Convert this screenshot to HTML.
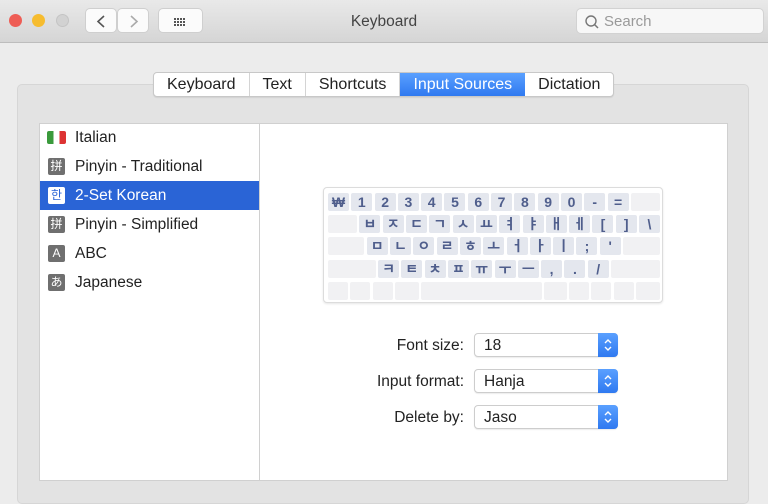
<!DOCTYPE html>
<html><head><meta charset="utf-8"><style>
*{box-sizing:border-box;margin:0;padding:0}
body{width:768px;height:491px;overflow:hidden;background:#ececec;font-family:"Liberation Sans","Noto Sans CJK KR",sans-serif;position:relative;color:#222}
.abs{position:absolute}
.title{left:0;top:0;width:768px;height:43px;background:linear-gradient(#e9e9e9,#d5d5d5);border-bottom:1px solid #bdbdbd}
.dot{width:13px;height:13px;border-radius:50%;top:14px}
.btn{background:#fbfbfb;border:1px solid #cfcfcf;border-radius:5px;height:25px;top:8px}
.group{left:17px;top:84px;width:732px;height:420px;background:#e3e3e3;border:1px solid #d6d6d6;border-radius:5px}
.tabs{left:153px;top:72px;height:25px;display:flex;border:1px solid #c8c8c8;border-radius:4px;background:#fff;overflow:hidden;box-shadow:0 1px 1px rgba(0,0,0,.08)}
.tabs div{font-size:16px;line-height:23px;padding:0 13px;border-right:1px solid #d4d4d4;color:#222}
.tabs .sel{background:linear-gradient(#5aa0ff,#2f79f0);color:#fff;border-right:none}
.panel{left:39px;top:123px;width:689px;height:358px;background:#fff;border:1px solid #d0d0d0}
.div{left:259px;top:123px;width:1px;height:358px;background:#d0d0d0}
.row{left:40px;width:219px;height:29px;font-size:15.5px;line-height:30px;padding-left:35px}
.ic{position:absolute;left:8px;top:6px;width:17px;height:17px;background:#6f6f6f;color:#fff;border-radius:2px;font-size:12px;line-height:17px;text-align:center}
.kb{left:323px;top:187px;width:340px;height:116px;background:#fff;border:1px solid #dcdcdc;border-radius:4px;box-shadow:0 1px 2px rgba(0,0,0,.1)}
.kr{position:absolute;left:4px;width:332px;height:18px;display:flex;gap:2.3px}
.k{width:21px;height:18px;background:#e4e7ee;border-radius:2px;color:#4f5e8c;font-weight:bold;font-size:14px;line-height:18px;text-align:center;flex:none}
.b{background:#f1f1f3;flex:1 1 auto;width:auto}
.lbl{font-size:15.5px;text-align:right;width:200px;left:264px}
.sel2{left:474px;width:144px;height:24px;background:#fff;border:1px solid #cdcdcd;border-radius:4px;font-size:15.5px;line-height:23px;padding-left:9px;box-shadow:0 1px 1px rgba(0,0,0,.08)}
.st{position:absolute;right:-1px;top:-1px;width:20px;height:24px;background:linear-gradient(#5aa0ff,#2f79f0);border-radius:0 4px 4px 0}
</style></head><body>
<div class="abs title"></div>
<div class="abs dot" style="left:9px;background:#ee5d55"></div>
<div class="abs dot" style="left:32px;background:#f6bc2f"></div>
<div class="abs dot" style="left:56px;background:#d2d2d2;border:1px solid #c4c4c4"></div>
<div class="abs btn" style="left:85px;width:32px"><svg width="32" height="25"><path d="M18 7 L12 12.5 L18 18" stroke="#555" stroke-width="1.6" fill="none"/></svg></div>
<div class="abs btn" style="left:117px;width:32px"><svg width="32" height="25"><path d="M13 7 L19 12.5 L13 18" stroke="#aaa" stroke-width="1.6" fill="none"/></svg></div>
<div class="abs btn" style="left:158px;width:45px"><svg width="45" height="25"><g fill="#555"><rect x="15" y="9" width="2" height="2"/><rect x="18" y="9" width="2" height="2"/><rect x="21" y="9" width="2" height="2"/><rect x="24" y="9" width="2" height="2"/><rect x="15" y="12" width="2" height="2"/><rect x="18" y="12" width="2" height="2"/><rect x="21" y="12" width="2" height="2"/><rect x="24" y="12" width="2" height="2"/><rect x="15" y="15" width="2" height="2"/><rect x="18" y="15" width="2" height="2"/><rect x="21" y="15" width="2" height="2"/><rect x="24" y="15" width="2" height="2"/></g></svg></div>
<div class="abs" style="left:0;width:768px;top:13px;text-align:center;font-size:15.5px;color:#444">Keyboard</div>
<div class="abs" style="left:576px;top:8px;width:188px;height:26px;background:#f7f7f7;border:1px solid #d2d2d2;border-radius:5px;font-size:15px;color:#9a9a9a;line-height:25px;padding-left:27px"><svg class="abs" style="left:7px;top:5px" width="16" height="16"><circle cx="7" cy="7" r="5" stroke="#777" stroke-width="1.4" fill="none"/><path d="M10.5 10.5 L14 14" stroke="#777" stroke-width="1.5"/></svg>Search</div>
<div class="abs group"></div>
<div class="abs tabs"><div>Keyboard</div><div>Text</div><div>Shortcuts</div><div class="sel">Input Sources</div><div style="border:none">Dictation</div></div>
<div class="abs panel"></div>
<div class="abs div"></div>
<div class="abs row" style="top:123px"><span class="ic" style="background:linear-gradient(90deg,#3a9a3c 33%,#fff 33%,#fff 66%,#d33 66%);top:8px;height:13px;width:19px;left:7px"></span>Italian</div>
<div class="abs row" style="top:152px"><span class="ic">拼</span>Pinyin - Traditional</div>
<div class="abs row" style="top:181px;background:#2a64d6;color:#fff"><span class="ic" style="background:#fff;color:#2a64d6">한</span>2-Set Korean</div>
<div class="abs row" style="top:210px"><span class="ic">拼</span>Pinyin - Simplified</div>
<div class="abs row" style="top:239px"><span class="ic">A</span>ABC</div>
<div class="abs row" style="top:268px"><span class="ic">あ</span>Japanese</div>
<div class="abs kb">
<div class="kr" style="top:5px"><div class="k">₩</div><div class="k">1</div><div class="k">2</div><div class="k">3</div><div class="k">4</div><div class="k">5</div><div class="k">6</div><div class="k">7</div><div class="k">8</div><div class="k">9</div><div class="k">0</div><div class="k">-</div><div class="k">=</div><div class="k b"></div></div>
<div class="kr" style="top:27px"><div class="k b"></div><div class="k">ㅂ</div><div class="k">ㅈ</div><div class="k">ㄷ</div><div class="k">ㄱ</div><div class="k">ㅅ</div><div class="k">ㅛ</div><div class="k">ㅕ</div><div class="k">ㅑ</div><div class="k">ㅐ</div><div class="k">ㅔ</div><div class="k">[</div><div class="k">]</div><div class="k">\</div></div>
<div class="kr" style="top:49px"><div class="k b"></div><div class="k">ㅁ</div><div class="k">ㄴ</div><div class="k">ㅇ</div><div class="k">ㄹ</div><div class="k">ㅎ</div><div class="k">ㅗ</div><div class="k">ㅓ</div><div class="k">ㅏ</div><div class="k">ㅣ</div><div class="k">;</div><div class="k">'</div><div class="k b" style="width:37px;flex:none"></div></div>
<div class="kr" style="top:72px"><div class="k b"></div><div class="k">ㅋ</div><div class="k">ㅌ</div><div class="k">ㅊ</div><div class="k">ㅍ</div><div class="k">ㅠ</div><div class="k">ㅜ</div><div class="k">ㅡ</div><div class="k">,</div><div class="k">.</div><div class="k">/</div><div class="k b" style="width:49px;flex:none"></div></div>
<div class="kr" style="top:94px"><div class="k b" style="flex:none;width:20px"></div><div class="k b" style="flex:none;width:20px"></div><div class="k b" style="flex:none;width:20px"></div><div class="k b" style="flex:none;width:24px"></div><div class="k b"></div><div class="k b" style="flex:none;width:23px"></div><div class="k b" style="flex:none;width:20px"></div><div class="k b" style="flex:none;width:20px"></div><div class="k b" style="flex:none;width:20px"></div><div class="k b" style="flex:none;width:24px"></div></div>
</div>
<div class="abs lbl" style="top:337px">Font size:</div>
<div class="abs lbl" style="top:373px">Input format:</div>
<div class="abs lbl" style="top:409px">Delete by:</div>
<div class="abs sel2" style="top:333px">18<span class="st"><svg width="20" height="24"><path d="M7 10 L10 7 L13 10 M7 14 L10 17 L13 14" stroke="#fff" stroke-width="1.4" fill="none"/></svg></span></div>
<div class="abs sel2" style="top:369px">Hanja<span class="st"><svg width="20" height="24"><path d="M7 10 L10 7 L13 10 M7 14 L10 17 L13 14" stroke="#fff" stroke-width="1.4" fill="none"/></svg></span></div>
<div class="abs sel2" style="top:405px">Jaso<span class="st"><svg width="20" height="24"><path d="M7 10 L10 7 L13 10 M7 14 L10 17 L13 14" stroke="#fff" stroke-width="1.4" fill="none"/></svg></span></div>
</body></html>
